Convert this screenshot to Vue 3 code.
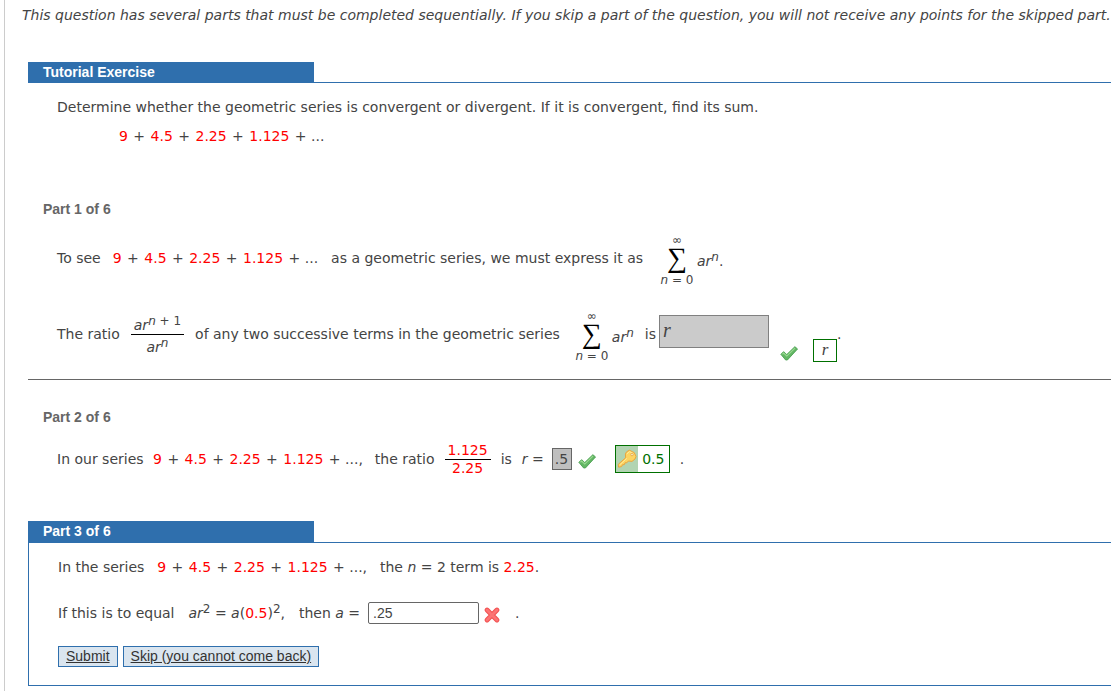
<template>
  <main class="question">
    <p class="intro">
      This question has several parts that must be completed sequentially. If you skip a part of the question, you will not receive any points for the skipped part.
    </p>

    <section class="tutorial">
      <h2 class="tab">Tutorial Exercise</h2>
      <div class="tutorial-body">
        <p>Determine whether the geometric series is convergent or divergent. If it is convergent, find its sum.</p>
        <p class="formula">
          <span class="series"><template v-for="t in terms" :key="t"><b>{{ t }}</b> + </template>...</span>
        </p>
      </div>
    </section>

    <section class="part part-one">
      <h3>Part 1 of 6</h3>
      <div class="row tall">
        <span>To see</span>
        <span class="series"><template v-for="t in terms" :key="t"><b>{{ t }}</b> + </template>...</span>
        <span class="express">as a geometric series, we must express it as</span>
        <span class="sum">
          <span class="limit">∞</span>
          <span class="sigma">∑</span>
          <span class="limit"><i>n</i> = 0</span>
        </span>
        <span class="term"><i>ar<sup>n</sup></i>.</span>
      </div>
      <div class="row tall">
        <span>The ratio</span>
        <span class="fraction power">
          <span class="numerator"><i>ar<sup>n</sup></i><sup> + 1</sup></span>
          <span class="denominator"><i>ar<sup>n</sup></i></span>
        </span>
        <span>of any two successive terms in the geometric series</span>
        <span class="sum">
          <span class="limit">∞</span>
          <span class="sigma">∑</span>
          <span class="limit"><i>n</i> = 0</span>
        </span>
        <span class="term"><i>ar<sup>n</sup></i></span>
        <label for="ratio-symbol">is</label>
        <input id="ratio-symbol" class="symbol" type="text" value="r" readonly>
        <svg class="mark low" viewBox="0 0 16 16" role="img" aria-label="Correct">
          <path d="M.8 9.2 3.2 6.8 6 9.4 13.2 2.4 15.6 4.4 6.6 14.2 5 14.2Z" fill="#63b765" stroke="#4a9f50" stroke-width=".8" stroke-linejoin="round" />
          <path d="M2.2 9.1 3.3 8 6 10.7 13.3 3.7" fill="none" stroke="#9cda92" />
        </svg>
        <span class="key-answer symbol-key"><i>r</i></span>
        <span class="stop">.</span>
      </div>
    </section>

    <section class="part part-two">
      <h3>Part 2 of 6</h3>
      <div class="row">
        <span class="lead">In our series
          <span class="series"><template v-for="t in terms" :key="t"><b>{{ t }}</b> + </template>...,</span>
        </span>
        <span>the ratio</span>
        <span class="fraction">
          <span class="numerator"><b>1.125</b></span>
          <span class="denominator"><b>2.25</b></span>
        </span>
        <span>is</span>
        <label for="ratio-value"><i>r</i> =</label>
        <input id="ratio-value" class="value" type="text" value=".5" readonly>
        <svg class="mark" viewBox="0 0 16 16" role="img" aria-label="Correct">
          <path d="M.8 9.2 3.2 6.8 6 9.4 13.2 2.4 15.6 4.4 6.6 14.2 5 14.2Z" fill="#63b765" stroke="#4a9f50" stroke-width=".8" stroke-linejoin="round" />
          <path d="M2.2 9.1 3.3 8 6 10.7 13.3 3.7" fill="none" stroke="#9cda92" />
        </svg>
        <span class="key-answer number-key">
          <span class="key-icon">
            <svg viewBox="0 0 20 20" aria-hidden="true">
              <path d="M9.6 2.8 12.4 1.2 17.2 3.6 19 7.4 18 10 15 12.4 11.4 12 9.8 13.8 8 13.8 7.4 15.6 5.4 15.8 4.6 17.6 1.6 18.2 1.2 15.4 8.6 8.8 8.4 5Z" fill="#fdd462" stroke="#e9a640" stroke-linejoin="round" />
              <path d="M9.8 5 12.6 2.6 16.4 4.8M9.8 9.4 2.8 15.8" fill="none" stroke="#ffec9c" />
              <circle cx="15" cy="5.6" r="1.2" fill="#fff4d8" stroke="#dc9b3a" stroke-width=".7" />
            </svg>
          </span>
          <span class="key-value">0.5</span>
        </span>
        <span class="end">.</span>
      </div>
    </section>

    <section class="current">
      <h2 class="tab">Part 3 of 6</h2>
      <form class="current-body" @submit.prevent>
        <p>
          In the series&nbsp;
          <span class="series"><template v-for="t in terms" :key="t"><b>{{ t }}</b> + </template>...,</span>&nbsp;
          the <i>n</i> = 2 term is <b>2.25</b>.
        </p>
        <div class="row answer-row">
          <span>If this is to equal</span>
          <span><i>ar</i><sup>2</sup> = <i>a</i>(<b>0.5</b>)<sup>2</sup>,</span>
          <label for="answer">then <i>a</i> =</label>
          <input id="answer" v-model="answer" class="answer" type="text">
          <svg class="mark wrong" viewBox="0 0 16 16" role="img" aria-label="Incorrect">
            <path d="M3.6 3.6 12.4 12.4M12.4 3.6 3.6 12.4" stroke="#f25050" stroke-width="4.4" stroke-linecap="round" />
            <path d="M3.6 3.6 12.4 12.4M12.4 3.6 3.6 12.4" stroke="#fc7373" stroke-width="2.6" stroke-linecap="round" />
          </svg>
          <span class="end">.</span>
        </div>
        <div class="actions">
          <button type="submit">Submit</button>
          <button type="button">Skip (you cannot come back)</button>
        </div>
      </form>
    </section>
  </main>
</template>

<script setup>
import { ref } from 'vue';

const terms = ['9', '4.5', '2.25', '1.125'];
const answer = ref('.25');
</script>

<style>
body {
  margin: 0;
  background: #fff;
}
</style>

<style scoped>
.question {
  box-sizing: border-box;
  min-height: 100vh;
  margin-left: 4px;
  padding: 5px 0 5px 23px;
  overflow: hidden;
  border-left: 1px solid #ccc;
  color: #444;
  font: 14px/20px Verdana, "DejaVu Sans", sans-serif;
}

p,
h2,
h3 {
  margin: 0;
}

b {
  color: #f00;
  font-weight: normal;
}

sup {
  font-size: 12px;
  line-height: 0;
  vertical-align: 5px;
}

.series {
  white-space: nowrap;
}

.series b {
  margin: 0 1px;
}

.intro {
  margin-left: -6px;
  font-style: italic;
  white-space: nowrap;
}

/* section headings */
.tab {
  box-sizing: border-box;
  width: 286px;
  padding-left: 15px;
  background: #2f6fad;
  color: #fff;
  font: bold 14px/20px Arial, "Liberation Sans", sans-serif;
}

h3 {
  padding-left: 15px;
  color: #666;
  font: bold 14px/20px Arial, "Liberation Sans", sans-serif;
}

.tutorial {
  margin-top: 37px;
}

.tutorial-body {
  padding: 14px 0 0 29px;
  border-top: 1px solid #2f6fad;
}

.formula {
  margin-top: 9px;
  padding-left: 61px;
}

/* equation rows */
.row {
  display: flex;
  align-items: center;
  gap: 10px;
  padding-left: 29px;
  white-space: nowrap;
}

.tall {
  gap: 11px;
  height: 56px;
}

.part-one {
  padding-bottom: 17px;
  margin-top: 53px;
  border-bottom: 1px solid #666;
}

.part-one .tall {
  margin-top: 20px;
}

.part-one h3 + .tall {
  margin-top: 11px;
}

.express {
  padding: 0 2px;
}

.sum {
  display: flex;
  flex-direction: column;
  align-items: center;
  width: 34px;
  margin: 4px 0 0 4px;
}

.limit {
  font-size: 12px;
  line-height: 12px;
}

.sigma {
  margin-bottom: 5px;
  color: #000;
  font: 28px/23px "Liberation Serif", serif;
}

.term {
  margin: 6px 0 0 -8px;
}

.fraction {
  display: flex;
  flex-direction: column;
  margin-top: 2px;
  text-align: center;
}

.fraction span {
  padding: 0 3px;
  line-height: 17px;
}

.fraction .denominator {
  border-top: 1px solid #000;
}

.power {
  margin-top: 4px;
}

.fraction.power .denominator {
  padding-top: 4px;
}

input {
  box-sizing: border-box;
  margin: 0;
  color: #444;
}

.symbol {
  width: 110px;
  height: 33px;
  margin: 0 0 6px -8px;
  padding: 0 3px 2px;
  border: 1px solid #808080;
  background: #cbcbcb;
  font: italic 20px/28px "Liberation Serif", serif;
}

.mark {
  flex: none;
  width: 18px;
  height: 18px;
}

.low {
  align-self: flex-end;
}

.key-answer {
  box-sizing: border-box;
  border: 1px solid #007000;
}

.symbol-key {
  align-self: flex-end;
  width: 24px;
  height: 23px;
  margin-left: 4px;
  font: 17px/20px "Liberation Serif", serif;
  text-align: center;
}

.stop {
  margin-left: -11px;
}

.part-two {
  margin-top: 27px;
}

.part-two .row {
  margin-top: 13px;
}

.lead {
  margin-right: 2px;
}

.lead .series {
  margin-left: 4px;
}

.value {
  width: 20px;
  height: 22px;
  margin-left: -2px;
  padding: 0 2px;
  border: 1px solid #666;
  background: #bfbfbf;
  font: 14px/20px Verdana, "DejaVu Sans", sans-serif;
}

.part-two .mark {
  margin: 4px 0 0 -4px;
}

.number-key {
  display: flex;
  width: 55px;
  height: 28px;
  margin-left: 9px;
  color: #007000;
  line-height: 26px;
}

.key-icon {
  display: flex;
  align-items: center;
  justify-content: center;
  width: 22px;
  background: #b2d4b2;
}

.key-icon svg {
  width: 20px;
  height: 20px;
}

.key-value {
  flex: 1;
  text-align: center;
}

.current {
  margin-top: 44px;
}

.current .tab {
  line-height: 21px;
}

.current-body {
  padding: 14px 0 18px 29px;
  border: 1px solid #2f6fad;
  border-right: 0;
}

.current-body .series {
  margin: 0 4px 0 3px;
}

.answer-row {
  gap: 14px;
  margin-top: 25px;
  padding-left: 0;
}

.answer {
  width: 111px;
  height: 22px;
  margin-left: -6px;
  padding: 0 4px;
  border: 1px solid #666;
  border-radius: 2px;
  font: 14px/20px Arial, "Liberation Sans", sans-serif;
}

.wrong {
  margin: 4px 0 0 -10px;
}

.actions {
  display: flex;
  gap: 5px;
  margin-top: 22px;
}

button {
  height: 21px;
  padding: 0 7px;
  border: 1px solid #2f6fad;
  border-radius: 0;
  background: #dae5ef;
  color: #333;
  font: 14px/19px Arial, "Liberation Sans", sans-serif;
  text-decoration: underline;
}
</style>
